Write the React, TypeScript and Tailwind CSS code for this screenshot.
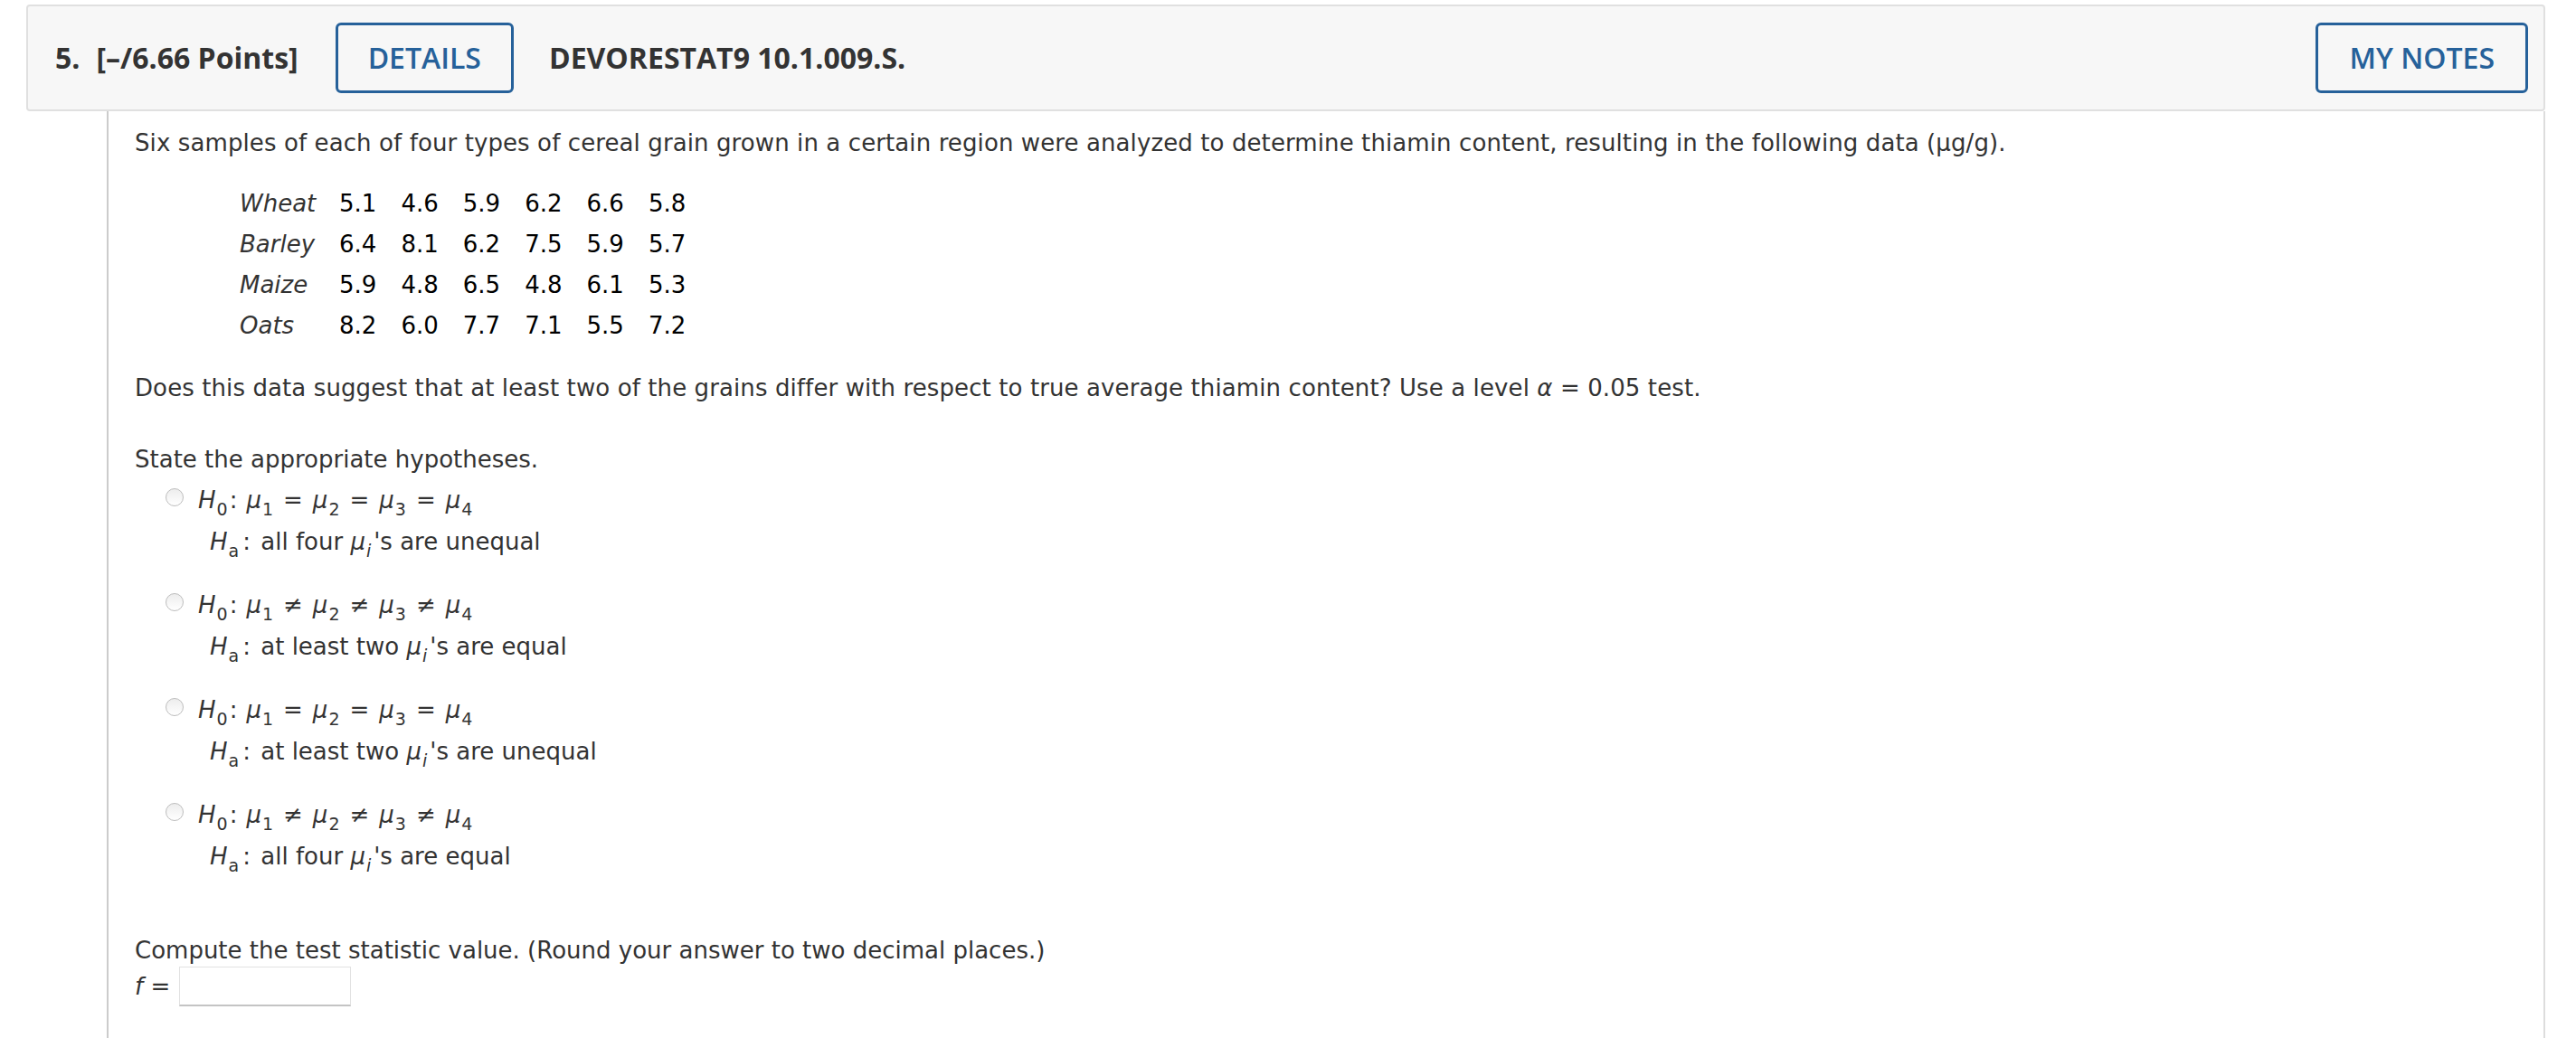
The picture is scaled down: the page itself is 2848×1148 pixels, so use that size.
import React from "react";

const GRAINS: { name: string; values: string[] }[] = [
  { name: "Wheat", values: ["5.1", "4.6", "5.9", "6.2", "6.6", "5.8"] },
  { name: "Barley", values: ["6.4", "8.1", "6.2", "7.5", "5.9", "5.7"] },
  { name: "Maize", values: ["5.9", "4.8", "6.5", "4.8", "6.1", "5.3"] },
  { name: "Oats", values: ["8.2", "6.0", "7.7", "7.1", "5.5", "7.2"] },
];

type Option = { rel: "=" | "≠"; alt: string; tail: string };

const OPTIONS: Option[] = [
  { rel: "=", alt: "all four", tail: "unequal" },
  { rel: "≠", alt: "at least two", tail: "equal" },
  { rel: "=", alt: "at least two", tail: "unequal" },
  { rel: "≠", alt: "all four", tail: "equal" },
];

function Sub({ children, italic }: { children: React.ReactNode; italic?: boolean }) {
  return (
    <span
      className={
        "relative top-[8px] ml-[1px] text-[19px] leading-none " +
        (italic ? "italic" : "")
      }
    >
      {children}
    </span>
  );
}

function Mu({ n }: { n: number }) {
  return (
    <span className="whitespace-nowrap">
      <i>μ</i>
      <Sub>{n}</Sub>
    </span>
  );
}

function Radio() {
  return (
    <span className="relative -top-[3px] mr-[16px] inline-block h-[20px] w-[20px] shrink-0 rounded-full border border-[#bdbdbd] bg-gradient-to-b from-[#ededed] to-white" />
  );
}

function Hypothesis({ opt }: { opt: Option }) {
  return (
    <div className="mb-[24px] text-[26px] leading-[46px]">
      <div className="ml-[34px] flex items-center">
        <Radio />
        <span className="whitespace-nowrap">
          <i>H</i>
          <Sub>0</Sub>
          <span className="ml-[2px] mr-[10px]">:</span>
          <Mu n={1} />
          <span className="mx-[11px]">{opt.rel}</span>
          <Mu n={2} />
          <span className="mx-[11px]">{opt.rel}</span>
          <Mu n={3} />
          <span className="mx-[11px]">{opt.rel}</span>
          <Mu n={4} />
        </span>
      </div>
      <div className="ml-[83px] whitespace-nowrap">
        <i>H</i>
        <Sub>a</Sub>
        <span className="ml-[4px] mr-[3px]">:</span> {opt.alt} <i>μ</i>
        <Sub italic>i</Sub>
        <span className="ml-[3px]">'s are {opt.tail}</span>
      </div>
    </div>
  );
}

export default function App() {
  return (
    <div className="flex min-h-screen flex-col bg-white pl-[29px] pr-[34px] pt-[5px] font-['DejaVu_Sans',Verdana,sans-serif] text-[#333]">
      <header className="flex h-[118px] items-center rounded-[4px] border-2 border-[#e0e0e0] bg-[#f7f7f7] pl-[30px] pr-[17px] font-['Open_Sans',sans-serif] text-[32px] text-[#333]">
        <span className="font-bold">5.</span>
        <span className="ml-[18px] font-bold">[–/6.66 Points]</span>
        <button
          type="button"
          className="ml-[41px] h-[78px] rounded-[6px] border-[3px] border-[#26619a] px-[33px] font-semibold text-[#26619a]"
        >
          DETAILS
        </button>
        <span className="ml-[39px] font-bold">DEVORESTAT9 10.1.009.S.</span>
        <button
          type="button"
          className="ml-auto h-[78px] rounded-[6px] border-[3px] border-[#26619a] px-[34px] font-semibold text-[#26619a]"
        >
          MY NOTES
        </button>
      </header>

      <main className="ml-[89px] flex-1 border-l-[2px] border-r-[2px] border-l-[#cccccc] border-r-[#dddddd] pb-[40px] pl-[29px] pt-[17px]">
        <p className="text-[26px] leading-[36px] tracking-[0.1px]">
          Six samples of each of four types of cereal grain grown in a certain
          region were analyzed to determine thiamin content, resulting in the
          following data (μg/g).
        </p>

        <div className="ml-[116px] mt-[27px] grid grid-cols-[110px_repeat(6,68.4px)] text-[26px] leading-[45px]">
          {GRAINS.map((g) => (
            <React.Fragment key={g.name}>
              <span className="italic text-[#333]">{g.name}</span>
              {g.values.map((v, i) => (
                <span key={i} className="text-black">
                  {v}
                </span>
              ))}
            </React.Fragment>
          ))}
        </div>

        <p className="mt-[28px] text-[26px] leading-[36px] tracking-[0.1px]">
          Does this data suggest that at least two of the grains differ with
          respect to true average thiamin content? Use a level <i>α</i> = 0.05
          test.
        </p>

        <p className="mt-[43px] text-[26px] leading-[36px]">
          State the appropriate hypotheses.
        </p>

        <div className="mt-[4px]">
          {OPTIONS.map((opt, i) => (
            <Hypothesis key={i} opt={opt} />
          ))}
        </div>

        <p className="mt-[63px] text-[26px] leading-[36px]">
          Compute the test statistic value. (Round your answer to two decimal
          places.)
        </p>
        <div className="flex items-center text-[26px] leading-[36px]">
          <span className="whitespace-nowrap">
            <i>f</i> =
          </span>
          <input
            type="text"
            className="ml-[10px] h-[44px] w-[190px] border border-[#e2e2e2] border-b-2 border-b-[#c4c4c4] bg-white outline-none"
          />
        </div>
      </main>
    </div>
  );
}
